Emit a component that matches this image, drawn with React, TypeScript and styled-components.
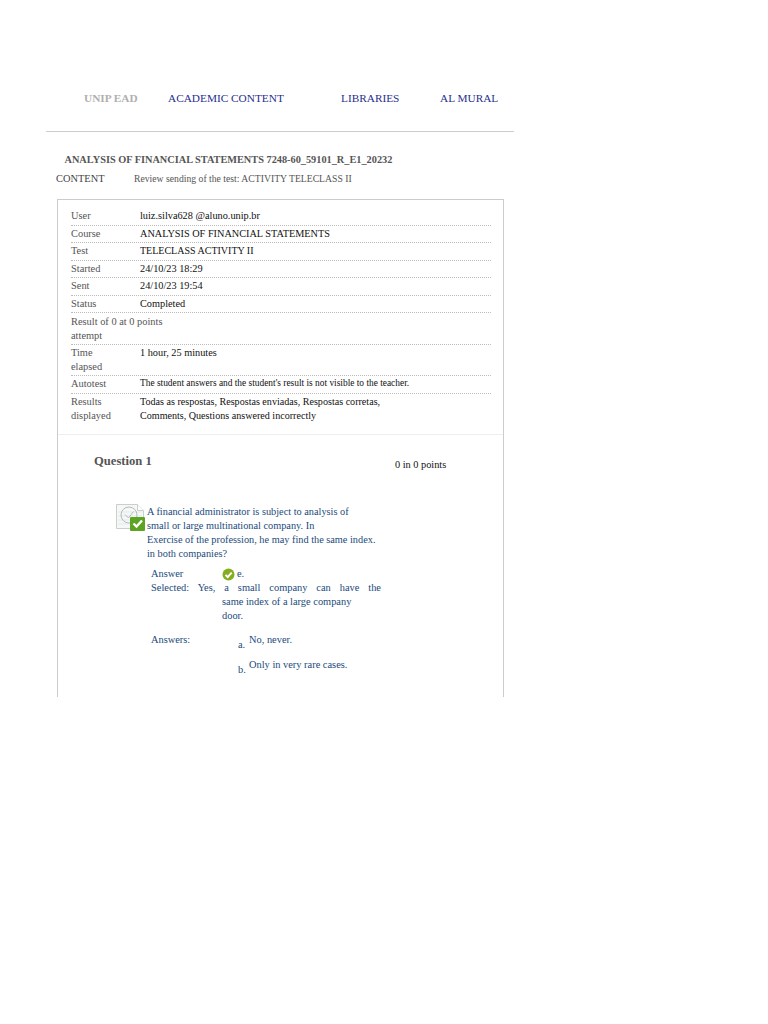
import React from 'react';
import styled, { createGlobalStyle } from 'styled-components';

const GlobalStyle = createGlobalStyle`
  html, body {
    margin: 0;
    padding: 0;
    background: #fff;
  }
  body {
    font-family: "Liberation Serif", "Times New Roman", serif;
    font-size: 10.4px;
    color: #444;
  }
`;

interface InfoRow {
  label: string;
  value: string;
  size?: number;
}

const rows: InfoRow[] = [
  { label: 'User', value: 'luiz.silva628 @aluno.unip.br' },
  { label: 'Course', value: 'ANALYSIS OF FINANCIAL STATEMENTS', size: 10.25 },
  { label: 'Test', value: 'TELECLASS ACTIVITY II', size: 10 },
  { label: 'Started', value: '24/10/23 18:29' },
  { label: 'Sent', value: '24/10/23 19:54' },
  { label: 'Status', value: 'Completed' },
];

const QuestionIcon = () => (
  <IconWrap>
    <svg width="29" height="27" viewBox="0 0 29 27">
      <path d="M0.5 0.5h21l6 6v18h-27z" fill="#f6f8f6" stroke="#c9cfc9" />
      <path d="M21.5 0.5v6h6" fill="#fff" stroke="#c9cfc9" />
      <path d="M2 8h24M2 12h24M2 16h24M2 20h24" stroke="#dfe9f2" />
      <circle cx="13" cy="11" r="8" fill="none" stroke="#b5bcb5" />
      <path d="M9 10.5l3.5 3.5 5-6.5" fill="none" stroke="#b5bcb5" />
      <rect x="14" y="13" width="15" height="14" rx="1" fill="#5da423" />
      <path d="M17.5 19.5l3 3 5.5-6" fill="none" stroke="#fff" strokeWidth="2.4" />
    </svg>
  </IconWrap>
);

const CheckBadge = () => (
  <BadgeWrap>
    <svg width="13" height="13" viewBox="0 0 13 13">
      <circle cx="6.5" cy="6.5" r="6" fill="#84ad1f" />
      <path d="M3.5 6.8l2.2 2.2 4-4.4" fill="none" stroke="#fff" strokeWidth="1.9" />
    </svg>
  </BadgeWrap>
);

const App: React.FC = () => (
  <>
    <GlobalStyle />
    <Page>
      <Nav>
        <NavItem muted width={84}>UNIP EAD</NavItem>
        <NavItem width={173}>ACADEMIC CONTENT</NavItem>
        <NavItem width={99}>LIBRARIES</NavItem>
        <NavItem>AL MURAL</NavItem>
      </Nav>
      <PageTitle>ANALYSIS OF FINANCIAL STATEMENTS 7248-60_59101_R_E1_20232</PageTitle>
      <Breadcrumb>
        <Crumb>CONTENT</Crumb>
        <CrumbCurrent>Review sending of the test: ACTIVITY TELECLASS II</CrumbCurrent>
      </Breadcrumb>
      <Panel>
        <InfoTable>
          {rows.map(row => (
            <Row key={row.label}>
              <Label>{row.label}</Label>
              <Value size={row.size}>{row.value}</Value>
            </Row>
          ))}
          <TallRow>
            <WideLabel>
              Result of 0 at 0 points
              <br />
              attempt
            </WideLabel>
          </TallRow>
          <TallRow>
            <Label>
              Time
              <br />
              elapsed
            </Label>
            <Value>1 hour, 25 minutes</Value>
          </TallRow>
          <Row>
            <Label>Autotest</Label>
            <Value size={9.4}>The student answers and the student's result is not visible to the teacher.</Value>
          </Row>
          <LastRow>
            <Label>
              Results
              <br />
              displayed
            </Label>
            <Value size={10.1}>
              Todas as respostas, Respostas enviadas, Respostas corretas,
              <br />
              Comments, Questions answered incorrectly
            </Value>
          </LastRow>
        </InfoTable>
        <QuestionSection>
          <QuestionHeader>
            <QuestionTitle>Question 1</QuestionTitle>
            <Points>0 in 0 points</Points>
          </QuestionHeader>
          <QuestionBody>
            <QuestionIcon />
            <QuestionText>
              A financial administrator is subject to analysis of
              <br />
              small or large multinational company. In
              <br />
              Exercise of the profession, he may find the same index.
              <br />
              in both companies?
            </QuestionText>
          </QuestionBody>
          <AnswerBlock>
            <AnswerHead>
              <AnswerLabel>Answer</AnswerLabel>
              <CheckBadge />
              <span>e.</span>
            </AnswerHead>
            <JustifiedLine>Selected: Yes, a small company can have the</JustifiedLine>
            <AnswerRest>
              same index of a large company
              <br />
              door.
            </AnswerRest>
          </AnswerBlock>
          <Answers>
            <AnswersLabel>Answers:</AnswersLabel>
            <Options>
              <Option>
                <OptionKey>a.</OptionKey>
                <span>No, never.</span>
              </Option>
              <Option>
                <OptionKey>b.</OptionKey>
                <span>Only in very rare cases.</span>
              </Option>
            </Options>
          </Answers>
        </QuestionSection>
      </Panel>
    </Page>
  </>
);

const Page = styled.div`
  width: 468px;
  height: 1024px;
  margin-left: 46px;
  padding-top: 90px;
  box-sizing: border-box;
  overflow: hidden;
`;

const Nav = styled.nav`
  display: flex;
  height: 41px;
  padding-left: 38px;
  border-bottom: 1px solid #ccc;
`;

const NavItem = styled.div<{ muted?: boolean; width?: number }>`
  width: ${({ width }) => (width ? `${width}px` : 'auto')};
  font-size: 11.3px;
  line-height: 16px;
  color: ${({ muted }) => (muted ? '#b0b0b0' : '#1f2f8f')};
  font-weight: ${({ muted }) => (muted ? 700 : 400)};
`;

const PageTitle = styled.h1`
  margin: 21px 0 0 18.5px;
  font-size: 10.3px;
  line-height: 13px;
  font-weight: 700;
  color: #555;
`;

const Breadcrumb = styled.div`
  display: flex;
  margin: 6px 0 0 10px;
  line-height: 13px;
`;

const Crumb = styled.div`
  width: 78px;
  color: #444;
`;

const CrumbCurrent = styled.div`
  font-size: 9.7px;
  color: #555;
`;

const Panel = styled.div`
  width: 447px;
  height: 498px;
  margin: 14px 0 0 11px;
  box-sizing: border-box;
  border: 1px solid #ccc;
  border-bottom: none;
`;

const InfoTable = styled.div`
  padding: 8px 12px 0 13px;
  border-bottom: 1px solid #eee;
`;

const Row = styled.div`
  display: flex;
  height: 17.5px;
  box-sizing: border-box;
  line-height: 15px;
  border-bottom: 1px dotted #bbb;
`;

const TallRow = styled(Row)`
  height: 31.5px;
  line-height: 14px;
  padding-top: 1px;
`;

const LastRow = styled(TallRow)`
  height: 40px;
  border-bottom: none;
`;

const Label = styled.div`
  flex: 0 0 69px;
  color: #555;
`;

const WideLabel = styled.div`
  padding-top: 1px;
  color: #555;
`;

const Value = styled.div<{ size?: number }>`
  color: #111;
  font-size: ${({ size }) => size ?? 10.3}px;
`;

const QuestionSection = styled.section`
  padding: 18px 0 0 36px;
`;

const QuestionHeader = styled.div`
  display: flex;
  align-items: flex-start;
`;

const QuestionTitle = styled.h2`
  width: 301px;
  margin: 0;
  font-size: 12.6px;
  line-height: 16px;
  font-weight: 700;
  color: #555;
`;

const Points = styled.div`
  padding-top: 6px;
  font-size: 10.3px;
  color: #111;
`;

const QuestionBody = styled.div`
  display: flex;
  margin: 34px 0 0 22px;
`;

const IconWrap = styled.div`
  flex: 0 0 31px;
  height: 27px;
`;

const QuestionText = styled.div`
  padding-top: 1px;
  font-size: 10.3px;
  line-height: 14px;
  color: #1a4a7c;
`;

const AnswerBlock = styled.div`
  width: 230px;
  margin: 6px 0 0 57px;
  line-height: 14px;
  color: #1a4a7c;
`;

const AnswerHead = styled.div`
  display: flex;
  align-items: center;
`;

const AnswerLabel = styled.div`
  width: 70px;
`;

const BadgeWrap = styled.span`
  display: flex;
  margin: 1px 2px 0 1px;
`;

const JustifiedLine = styled.div`
  text-align: justify;
  text-align-last: justify;
`;

const AnswerRest = styled.div`
  padding-left: 71px;
`;

const Answers = styled.div`
  display: flex;
  margin: 10px 0 0 57px;
  color: #1a4a7c;
`;

const AnswersLabel = styled.div`
  width: 87px;
  line-height: 14px;
`;

const Options = styled.div`
  display: flex;
  flex-direction: column;
  gap: 6px;
`;

const Option = styled.div`
  display: flex;
  line-height: 14px;
`;

const OptionKey = styled.span`
  width: 11px;
  padding-top: 5px;
`;

export default App;
